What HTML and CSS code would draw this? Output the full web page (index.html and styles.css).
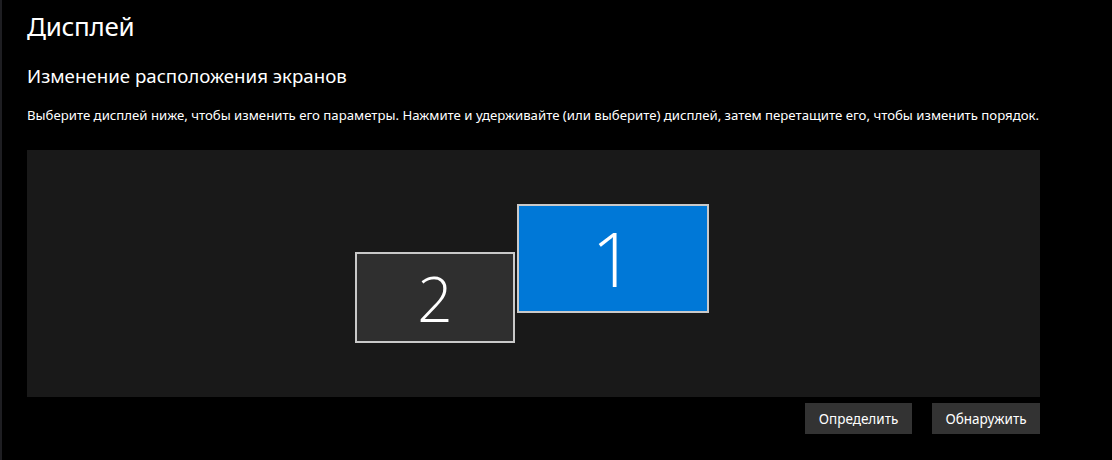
FILE: index.html
```html
<!DOCTYPE html>
<html lang="ru">
<head>
<meta charset="utf-8">
<title>Дисплей</title>
<link rel="stylesheet" href="styles.css">
</head>
<body>
<div class="page">
  <h1 class="title">Дисплей</h1>
  <h2 class="subtitle">Изменение расположения экранов</h2>
  <p class="desc">Выберите дисплей ниже, чтобы изменить его параметры. Нажмите и удерживайте (или выберите) дисплей, затем перетащите его, чтобы изменить порядок.</p>
  <div class="canvas">
    <div class="monitor monitor-2"><span>2</span></div>
    <div class="monitor monitor-1"><span>1</span></div>
  </div>
  <div class="actions">
    <button class="btn">Определить</button>
    <button class="btn">Обнаружить</button>
  </div>
</div>
</body>
</html>
```

FILE: styles.css
```css
html, body {
  margin: 0;
  padding: 0;
  background: #000;
  height: 100%;
}
body {
  border-left: 2px solid #1e1e22;
  box-sizing: border-box;
  font-family: "Noto Sans", "Open Sans", sans-serif;
  color: #fff;
}
.page {
  padding: 0 0 0 25px;
  width: 1013px;
}
.title {
  margin: 0;
  padding-top: 6px;
  font-size: 26px;
  letter-spacing: -0.3px;
  font-weight: 400;
  line-height: 40px;
  height: 42px;
}
.subtitle {
  margin: 0;
  padding-top: 14px;
  font-size: 18.7px;
  font-weight: 400;
  line-height: 28px;
}
.desc {
  margin: 0;
  padding-top: 16px;
  font-size: 13.2px;
  line-height: 18px;
  white-space: nowrap;
}
.canvas {
  position: relative;
  margin-top: 26px;
  width: 1013px;
  height: 247px;
  background: #191919;
}
.monitor {
  position: absolute;
  box-sizing: border-box;
  border: 2px solid #c9c9c9;
  display: flex;
  align-items: center;
  justify-content: center;
  font-family: "Open Sans", sans-serif;
  font-weight: 300;
  color: #fff;
}
.monitor span {
  line-height: 1;
}
.monitor-2 {
  left: 328px;
  top: 102px;
  width: 160px;
  height: 91px;
  background: #2f2f2f;
  font-size: 62px;
}
.monitor-1 {
  left: 490px;
  top: 54px;
  width: 192px;
  height: 109px;
  background: #0078d7;
  font-size: 75px;
}
.actions {
  display: flex;
  justify-content: flex-end;
  gap: 20px;
  margin-top: 6px;
}
.btn {
  height: 31px;
  border: 0;
  background: #333;
  color: #fff;
  font-family: "Noto Sans", "Open Sans", sans-serif;
  font-size: 13.5px;
  padding: 0;
  width: 107px;
}
.btn + .btn {
  width: 108px;
}
```
